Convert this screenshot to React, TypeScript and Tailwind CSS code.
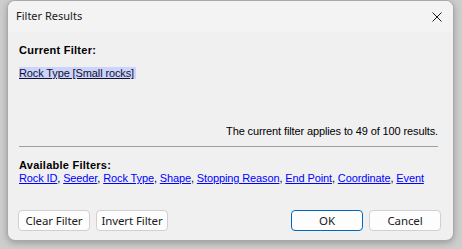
import React from "react";

const body = { fontFamily: '"Liberation Sans", Arial, sans-serif' };
const ui = { fontFamily: '"Noto Sans", "Open Sans", sans-serif' };

function Btn({ label, primary }: { label: string; primary?: boolean }) {
  return (
    <button
      className={
        "w-[72px] h-[21px] rounded-[4px] bg-[#fdfdfd] text-[11.5px] leading-none text-[#1b1b1b] flex items-center justify-center border tracking-[-0.1px] " +
        (primary ? "border-[#0067c0]" : "border-[#d0d0d0]")
      }
      style={ui}
    >
      {label}
    </button>
  );
}

const filters = [
  "Rock ID",
  "Seeder",
  "Rock Type",
  "Shape",
  "Stopping Reason",
  "End Point",
  "Coordinate",
  "Event",
];

export default function App() {
  return (
    <div className="w-[462px] h-[249px] bg-[#cdcdcd] pl-[7px] overflow-hidden">
      <div className="w-[447px] h-[241px] rounded-[8px] border border-[#a9a9a9] bg-[#f0f0f0] overflow-hidden flex flex-col shadow-[0_2px_6px_rgba(0,0,0,0.25)]">
        <div className="h-[31px] bg-[#f3f3f3] flex items-center justify-between pl-[8px] pr-[10px]">
          <span className="text-[11px] text-[#1a1a1a]" style={ui}>
            Filter Results
          </span>
          <svg width="10" height="10" viewBox="0 0 10 10" className="mr-[1px]">
            <path d="M0.5 0.5 L9.5 9.5 M9.5 0.5 L0.5 9.5" stroke="#1a1a1a" strokeWidth="1" />
          </svg>
        </div>
        <div className="flex-1 flex flex-col pl-[11px] pr-[15px] text-[11px] text-black tracking-[-0.12px]" style={body}>
          <div className="mt-[12px] leading-[13px] font-bold tracking-[0.25px]">Current Filter:</div>
          <div className="mt-[10px] leading-[13px]">
            <span className="bg-[#ccd4fb] underline text-[#101030] pr-[2px]">Rock Type [Small rocks]</span>
          </div>
          <div className="mt-[45px] leading-[13px] text-right">
            The current filter applies to 49 of 100 results.
          </div>
          <div className="mt-[8px] h-px bg-[#a0a0a0]" />
          <div className="mt-[12px] leading-[13px] font-bold tracking-[0.25px]">Available Filters:</div>
          <div className="leading-[13px]">
            {filters.map((f, i) => (
              <React.Fragment key={f}>
                <span className="text-[#0000ff] underline">{f}</span>
                {i < filters.length - 1 ? ", " : ""}
              </React.Fragment>
            ))}
          </div>
          <div className="mt-[25px] flex items-center">
            <div className="-ml-[1px] flex gap-[6px]">
              <Btn label="Clear Filter" />
              <Btn label="Invert Filter" />
            </div>
            <div className="ml-auto mr-[-3px] flex gap-[6px]">
              <Btn label="OK" primary />
              <Btn label="Cancel" />
            </div>
          </div>
        </div>
      </div>
    </div>
  );
}
